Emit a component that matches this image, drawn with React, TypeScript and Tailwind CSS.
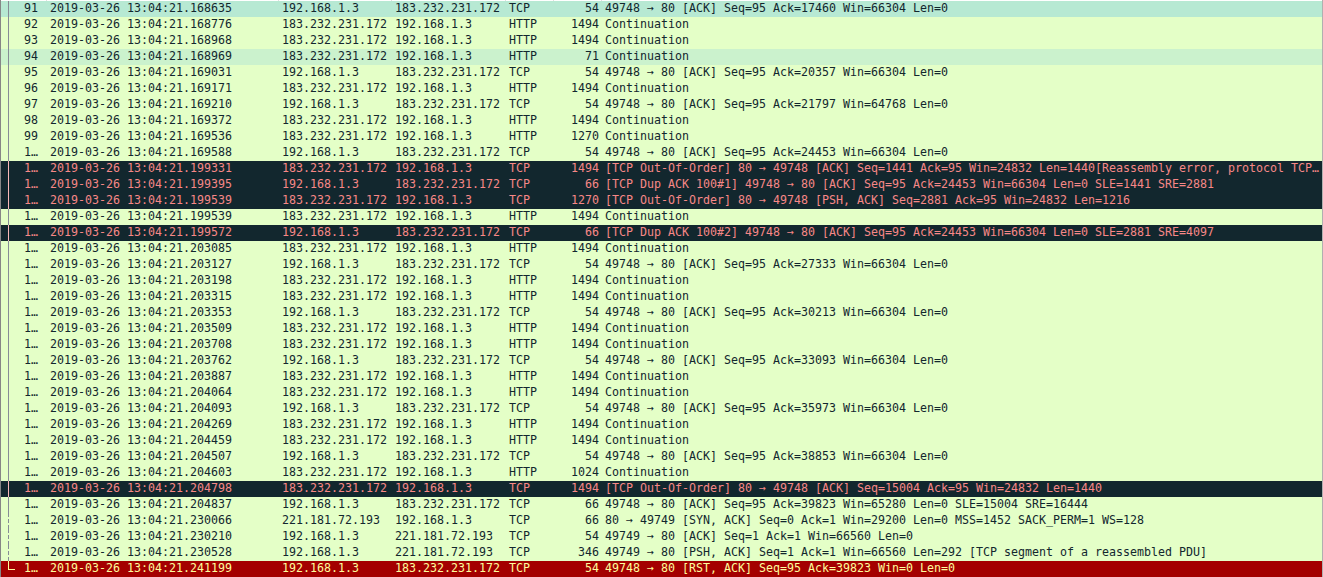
import clsx from "clsx";

type Tone = "selected" | "related" | "http" | "bad" | "reset";

type Packet = {
  no: string;
  time: string;
  src: string;
  dst: string;
  proto: string;
  len: number;
  info: string;
  tone: Tone;
};

const LOCAL = "192.168.1.3";
const SERVER = "183.232.231.172";
const OTHER = "221.181.72.193";

const row = (
  no: string,
  time: string,
  src: string,
  dst: string,
  proto: string,
  len: number,
  info: string,
  tone: Tone = "http"
): Packet => ({ no, time, src, dst, proto, len, info, tone });

// server -> local, http body chunk
const body = (no: string, time: string, len = 1494, tone: Tone = "http") =>
  row(no, time, SERVER, LOCAL, "HTTP", len, "Continuation", tone);

// local -> server, plain ack
const ack = (no: string, time: string, ackNo: number, win = 66304, tone: Tone = "http") =>
  row(no, time, LOCAL, SERVER, "TCP", 54, `49748 → 80 [ACK] Seq=95 Ack=${ackNo} Win=${win} Len=0`, tone);

const packets: Packet[] = [
  ack("91", "21.168635", 17460, 66304, "selected"),
  body("92", "21.168776"),
  body("93", "21.168968"),
  body("94", "21.168969", 71, "related"),
  ack("95", "21.169031", 20357),
  body("96", "21.169171"),
  ack("97", "21.169210", 21797, 64768),
  body("98", "21.169372"),
  body("99", "21.169536", 1270),
  ack("1…", "21.169588", 24453),
  row("1…", "21.199331", SERVER, LOCAL, "TCP", 1494, "[TCP Out-Of-Order] 80 → 49748 [ACK] Seq=1441 Ack=95 Win=24832 Len=1440[Reassembly error, protocol TCP…", "bad"),
  row("1…", "21.199395", LOCAL, SERVER, "TCP", 66, "[TCP Dup ACK 100#1] 49748 → 80 [ACK] Seq=95 Ack=24453 Win=66304 Len=0 SLE=1441 SRE=2881", "bad"),
  row("1…", "21.199539", SERVER, LOCAL, "TCP", 1270, "[TCP Out-Of-Order] 80 → 49748 [PSH, ACK] Seq=2881 Ack=95 Win=24832 Len=1216", "bad"),
  body("1…", "21.199539"),
  row("1…", "21.199572", LOCAL, SERVER, "TCP", 66, "[TCP Dup ACK 100#2] 49748 → 80 [ACK] Seq=95 Ack=24453 Win=66304 Len=0 SLE=2881 SRE=4097", "bad"),
  body("1…", "21.203085"),
  ack("1…", "21.203127", 27333),
  body("1…", "21.203198"),
  body("1…", "21.203315"),
  ack("1…", "21.203353", 30213),
  body("1…", "21.203509"),
  body("1…", "21.203708"),
  ack("1…", "21.203762", 33093),
  body("1…", "21.203887"),
  body("1…", "21.204064"),
  ack("1…", "21.204093", 35973),
  body("1…", "21.204269"),
  body("1…", "21.204459"),
  ack("1…", "21.204507", 38853),
  body("1…", "21.204603", 1024),
  row("1…", "21.204798", SERVER, LOCAL, "TCP", 1494, "[TCP Out-Of-Order] 80 → 49748 [ACK] Seq=15004 Ack=95 Win=24832 Len=1440", "bad"),
  row("1…", "21.204837", LOCAL, SERVER, "TCP", 66, "49748 → 80 [ACK] Seq=95 Ack=39823 Win=65280 Len=0 SLE=15004 SRE=16444"),
  row("1…", "21.230066", OTHER, LOCAL, "TCP", 66, "80 → 49749 [SYN, ACK] Seq=0 Ack=1 Win=29200 Len=0 MSS=1452 SACK_PERM=1 WS=128"),
  row("1…", "21.230210", LOCAL, OTHER, "TCP", 54, "49749 → 80 [ACK] Seq=1 Ack=1 Win=66560 Len=0"),
  row("1…", "21.230528", LOCAL, OTHER, "TCP", 346, "49749 → 80 [PSH, ACK] Seq=1 Ack=1 Win=66560 Len=292 [TCP segment of a reassembled PDU]"),
  row("1…", "21.241199", LOCAL, SERVER, "TCP", 54, "49748 → 80 [RST, ACK] Seq=95 Ack=39823 Win=0 Len=0", "reset"),
];

const tones: Record<Tone, string> = {
  selected: "bg-[#b7e9d3] text-[#12272e]",
  related: "bg-[#cbf2cd] text-[#12272e]",
  http: "bg-[#e4ffc7] text-[#12272e]",
  bad: "bg-[#12272e] text-[#f78787]",
  reset: "bg-[#a40000] text-[#fffc9c]",
};

const COLS = "grid grid-cols-[46px_232px_113px_114px_48px_48px_1fr]";

const Thread = ({ packet }: { packet: Packet }) => {
  const stroke = { bad: "#f9b9b9", reset: "#fffc9c", http: "#868c96", selected: "#868c96", related: "#868c96" }[packet.tone];
  // packets of another conversation get a dashed line
  const foreign = packet.src === OTHER || packet.dst === OTHER;
  return (
    <svg width="15" height="16" className="shrink-0" shapeRendering="crispEdges" fill="none" stroke={stroke}>
      {packet.tone === "reset" ? (
        <path d="M7.5 0V8.5H14" />
      ) : (
        <path d="M7.5 0V16" strokeDasharray={foreign ? "4 2" : undefined} />
      )}
    </svg>
  );
};

const PacketRow = ({ packet }: { packet: Packet }) => (
  <div className={clsx(COLS, "h-4 whitespace-pre leading-[14px]", tones[packet.tone])}>
    <div className="flex">
      <Thread packet={packet} />
      <span className="pl-2">{packet.no}</span>
    </div>
    <span className="pl-[3px]">2019-03-26 13:04:{packet.time}</span>
    <span className="pl-[3px]">{packet.src}</span>
    <span className="pl-[3px]">{packet.dst}</span>
    <span className="pl-[3px]">{packet.proto}</span>
    <span className="pr-[3px] text-right">{packet.len}</span>
    <span className="overflow-hidden pl-[3px]">{packet.info}</span>
  </div>
);

export default function App() {
  return (
    <div className="h-[577px] w-[1323px] overflow-hidden border-x border-l-[#868686] border-r-[#b0b0b0] bg-white font-['DejaVu_Sans_Mono',monospace] text-[11.63px]">
      <div className={clsx(COLS, "h-px")}>
        {[0, 1, 2, 3, 4, 5].map((i) => (
          <div key={i} className="border-r border-[#e0e0e0]" />
        ))}
      </div>
      {packets.map((packet, i) => (
        <PacketRow key={i} packet={packet} />
      ))}
    </div>
  );
}
